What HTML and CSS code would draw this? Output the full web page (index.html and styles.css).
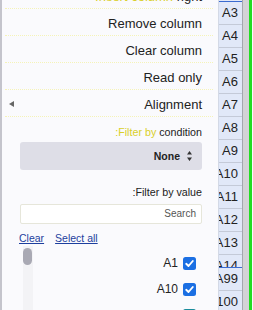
FILE: index.html
```html
<!DOCTYPE html>
<html>
<head>
<meta charset="utf-8">
<link rel="stylesheet" href="styles.css">
</head>
<body>
<div class="screen">
  <div class="menu">
    <ul class="items">
      <li class="item"><span class="yl">Insert column</span> right</li>
      <li class="item">Remove column</li>
      <li class="item">Clear column</li>
      <li class="item">Read only</li>
      <li class="item sub"><span class="arrow"></span><span>Alignment</span></li>
    </ul>
    <div class="filters">
      <div class="label label-cond"><span class="yl">:Filter by</span> condition</div>
      <div class="select">
        <span class="sel-val">None</span>
        <svg class="sel-arrows" width="5" height="10" viewBox="0 0 5 10"><path d="M2.5 0 L5 3.6 H0 Z M0 6.4 H5 L2.5 10 Z" fill="#333"/></svg>
      </div>
      <div class="label label-value">:Filter by value</div>
      <div class="search">Search</div>
      <div class="links"><a class="link">Clear</a><a class="link">Select all</a></div>
      <div class="list">
        <div class="track"><div class="thumb"></div></div>
        <div class="values">
          <div class="val"><span>A1</span><span class="cb"><svg width="13" height="13" viewBox="0 0 13 13"><path d="M3.2 6.8 L5.5 9 L9.8 4" fill="none" stroke="#fff" stroke-width="1.9" stroke-linecap="round" stroke-linejoin="round"/></svg></span></div>
          <div class="val"><span>A10</span><span class="cb"><svg width="13" height="13" viewBox="0 0 13 13"><path d="M3.2 6.8 L5.5 9 L9.8 4" fill="none" stroke="#fff" stroke-width="1.9" stroke-linecap="round" stroke-linejoin="round"/></svg></span></div>
          <div class="val"><span>A100</span><span class="cb cb-teal"><svg width="13" height="13" viewBox="0 0 13 13"><path d="M3.2 6.8 L5.5 9 L9.8 4" fill="none" stroke="#fff" stroke-width="1.9" stroke-linecap="round" stroke-linejoin="round"/></svg></span></div>
        </div>
      </div>
    </div>
  </div>
  <div class="headers">
    <div class="head-body">
      <div class="hcell">A3</div>
      <div class="hcell">A4</div>
      <div class="hcell">A5</div>
      <div class="hcell">A6</div>
      <div class="hcell">A7</div>
      <div class="hcell">A8</div>
      <div class="hcell">A9</div>
      <div class="hcell">A10</div>
      <div class="hcell">A11</div>
      <div class="hcell">A12</div>
      <div class="hcell">A13</div>
      <div class="hcell">A14</div>
    </div>
    <div class="head-bottom">
      <div class="hcell">A99</div>
      <div class="hcell">A100</div>
    </div>
  </div>
  <div class="gutter"></div>
  <div class="green"></div>
  <div class="edge"></div>
</div>
</body>
</html>
```
FILE: styles.css
```css
* { box-sizing: border-box; }
html, body { margin: 0; padding: 0; background: #fff; }
body { font-family: "Liberation Sans", Arial, sans-serif; color: #222; }

.screen {
  display: flex;
  width: 253px;
  height: 310px;
  overflow: hidden;
}

.menu {
  width: 218px;
  flex: none;
  height: 310px;
  overflow: hidden;
  background: #fafafd;
  border-left: 2px solid #c4c4cc;
}

.items {
  list-style: none;
  margin: -18px 0 0;
  padding: 0;
}
.item {
  height: 27px;
  margin: 0 5px 0 3px;
  padding: 4px 11px 0 0;
  line-height: 22px;
  font-size: 13px;
  text-align: right;
  white-space: nowrap;
  border-bottom: 1px dotted #f5f3b8;
}
.yl { color: #d9cf2a; }
.sub {
  display: flex;
  justify-content: space-between;
  align-items: center;
  padding-left: 4px;
}
.arrow {
  width: 0;
  height: 0;
  border-top: 3px solid transparent;
  border-bottom: 3px solid transparent;
  border-right: 5px solid #666;
  margin-top: -3px;
}

.filters {
  padding: 0 16px 0 18px;
}
.label {
  font-size: 10.7px;
  line-height: 12px;
  text-align: right;
  white-space: nowrap;
}
.label-cond { padding-top: 9px; }
.select {
  margin-top: 4px;
  height: 28px;
  background: #dedee7;
  border-radius: 3px;
  display: flex;
  justify-content: flex-end;
  align-items: center;
  gap: 7px;
  padding-right: 10px;
}
.sel-val {
  font-size: 10.5px;
  font-weight: bold;
  color: #222;
}
.sel-arrows { display: block; }
.label-value { margin-top: 16px; }
.search {
  margin-top: 6px;
  height: 20px;
  background: #fff;
  border: 1px solid #e6e6da;
  border-radius: 2px;
  font-size: 10px;
  line-height: 18px;
  color: #555;
  text-align: right;
  padding-right: 5px;
}
.links {
  margin: 8px 0 0 -1px;
  display: flex;
  gap: 11px;
  font-size: 10.5px;
  line-height: 12px;
}
.link {
  color: #1d3f9e;
  text-decoration: underline;
}
.list {
  margin-top: 2px;
  display: flex;
  height: 80px;
}
.track {
  margin-left: 3px;
  width: 10px;
  background: #f3f3f6;
  padding-top: 2px;
}
.thumb {
  width: 9px;
  height: 17px;
  border-radius: 5px;
  background: #a9a9b4;
}
.values {
  flex: 1;
  padding: 4px 6px 0 0;
}
.val {
  height: 26px;
  display: flex;
  justify-content: flex-end;
  align-items: center;
  gap: 5px;
  font-size: 12px;
  color: #222;
}
.cb {
  width: 13px;
  height: 13px;
  border-radius: 2.5px;
  background: #1b6fe3;
  display: block;
}
.cb svg { display: block; }
.cb-teal { background: #1a8c9c; }

.headers {
  width: 25px;
  flex: none;
  background: #e1e8f8;
  border-right: 1px solid #a4a6ae;
  border-left: 1px solid #d3d9e6;
  display: flex;
  flex-direction: column;
}
.head-body {
  margin-top: 1px;
  border-top: 1px solid #3a6bd0;
  height: 266px;
  overflow: hidden;
  flex: none;
}
.head-bottom {
  border-top: 1px solid #3a6bd0;
}
.hcell {
  height: 23px;
  border-bottom: 1px solid #c4cad8;
  font-size: 13px;
  line-height: 22px;
  text-align: right;
  padding-right: 4px;
  direction: rtl;
  white-space: nowrap;
  overflow: hidden;
  color: #222;
}

.gutter {
  width: 6px;
  flex: none;
  background: #d3d3d6;
}
.green {
  width: 3px;
  flex: none;
  background: #22dd22;
}
.edge {
  width: 1px;
  flex: none;
  background: #fafafa;
}
```
